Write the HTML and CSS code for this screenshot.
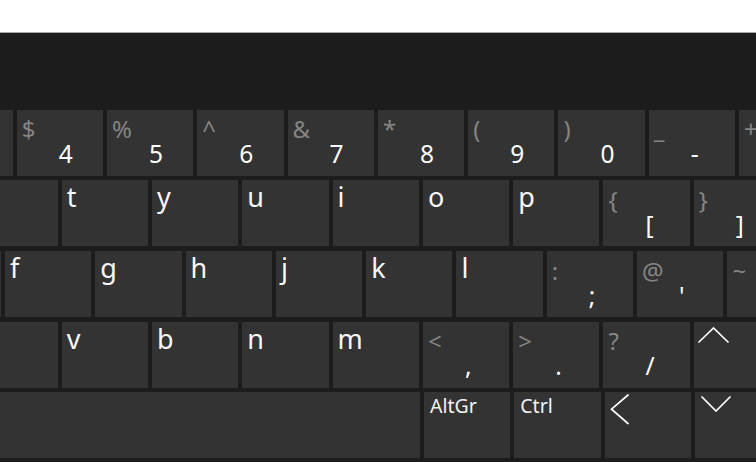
FILE: index.html
```html
<!DOCTYPE html>
<html lang="en">
<head>
<meta charset="utf-8">
<title>Touch keyboard</title>
<link rel="stylesheet" href="styles.css">
</head>
<body>
<div class="titlebar"></div>
<div class="keyboard">
  <div class="row row-1">
    <div class="key"></div>
    <div class="key sym"><span class="sec">$</span><span class="pri">4</span></div>
    <div class="key sym"><span class="sec">%</span><span class="pri">5</span></div>
    <div class="key sym"><span class="sec">^</span><span class="pri">6</span></div>
    <div class="key sym"><span class="sec">&amp;</span><span class="pri">7</span></div>
    <div class="key sym"><span class="sec">*</span><span class="pri">8</span></div>
    <div class="key sym"><span class="sec">(</span><span class="pri">9</span></div>
    <div class="key sym"><span class="sec">)</span><span class="pri">0</span></div>
    <div class="key sym"><span class="sec">_</span><span class="pri">-</span></div>
    <div class="key sym"><span class="sec">+</span></div>
  </div>
  <div class="row row-2">
    <div class="key"></div>
    <div class="key let"><span class="ch">t</span></div>
    <div class="key let"><span class="ch">y</span></div>
    <div class="key let"><span class="ch">u</span></div>
    <div class="key let"><span class="ch">i</span></div>
    <div class="key let"><span class="ch">o</span></div>
    <div class="key let"><span class="ch">p</span></div>
    <div class="key sym"><span class="sec">{</span><span class="pri">[</span></div>
    <div class="key sym"><span class="sec">}</span><span class="pri">]</span></div>
  </div>
  <div class="row row-3">
    <div class="key"></div>
    <div class="key let"><span class="ch">f</span></div>
    <div class="key let"><span class="ch">g</span></div>
    <div class="key let"><span class="ch">h</span></div>
    <div class="key let"><span class="ch">j</span></div>
    <div class="key let"><span class="ch">k</span></div>
    <div class="key let"><span class="ch">l</span></div>
    <div class="key sym"><span class="sec">:</span><span class="pri">;</span></div>
    <div class="key sym"><span class="sec">@</span><span class="pri">'</span></div>
    <div class="key sym"><span class="sec">~</span></div>
  </div>
  <div class="row row-4">
    <div class="key"></div>
    <div class="key let"><span class="ch">v</span></div>
    <div class="key let"><span class="ch">b</span></div>
    <div class="key let"><span class="ch">n</span></div>
    <div class="key let"><span class="ch">m</span></div>
    <div class="key sym"><span class="sec">&lt;</span><span class="pri">,</span></div>
    <div class="key sym"><span class="sec">&gt;</span><span class="pri">.</span></div>
    <div class="key sym"><span class="sec">?</span><span class="pri">/</span></div>
    <div class="key icon">
      <svg class="chev chev-up" width="31" height="16" viewBox="0 0 31 16"><polyline points="1,15 15.5,1 30,15" /></svg>
    </div>
  </div>
  <div class="row row-5">
    <div class="key space"></div>
    <div class="key mod"><span class="lbl">AltGr</span></div>
    <div class="key mod"><span class="lbl">Ctrl</span></div>
    <div class="key icon">
      <svg class="chev chev-left" width="20" height="31" viewBox="0 0 20 31"><polyline points="18,1 1.5,15.2 18,29.5" /></svg>
    </div>
    <div class="key icon">
      <svg class="chev chev-down" width="31" height="16" viewBox="0 0 31 16"><polyline points="1,1 15,15 29,1" /></svg>
    </div>
  </div>
</div>
</body>
</html>
```

FILE: styles.css
```css
html, body {
  margin: 0;
  padding: 0;
}

body {
  width: 756px;
  height: 462px;
  overflow: hidden;
  background: #1c1c1c;
  font-family: "Noto Sans", "Open Sans", "DejaVu Sans", sans-serif;
}

.titlebar {
  height: 32px;
  background: #ffffff;
  border-bottom: 1px solid #a9a9a9;
}

.keyboard {
  display: flex;
  flex-direction: column;
  gap: 4.7px;
  padding-top: 76.5px;
  height: 429px;
  box-sizing: border-box;
  overflow: hidden;
}

.row {
  display: flex;
  gap: 4px;
  height: 66px;
  flex-shrink: 0;
}

.row-1 { margin-left: -73.6px; }
.row-2 { margin-left: -28.6px; }
.row-3 { margin-left: -85.3px; }
.row-4 { margin-left: -28.6px; }
.row-5 { margin-left: -10px; }

.key {
  flex: 0 0 86.3px;
  height: 66px;
  box-sizing: border-box;
  background: #333333;
  padding-left: 5px;
  display: flex;
  flex-direction: column;
  color: #ffffff;
}

.key.space {
  flex-basis: 430px;
}

.key.sym {
  padding-top: 6.7px;
}

.sec {
  display: block;
  height: 25px;
  font-size: 24px;
  line-height: 25px;
  color: #858585;
}

.pri {
  display: block;
  font-size: 24.5px;
  line-height: 25px;
  margin-left: 37px;
  color: #ffffff;
}

.key.let {
  padding-top: 2px;
}

.ch {
  font-size: 27px;
  line-height: 30px;
  color: #f7f7f7;
}

.key.mod {
  padding-left: 6px;
  padding-top: 2.5px;
}

.lbl {
  font-size: 19.5px;
  line-height: 22px;
  color: #f2f2f2;
}

.chev {
  display: block;
  fill: none;
  stroke: #ffffff;
  stroke-width: 1.7;
  stroke-linecap: round;
  stroke-linejoin: miter;
}

.chev-up {
  margin: 5px 0 0 -1px;
}

.chev-down {
  margin: 4px 0 0 1px;
}

.chev-left {
  margin: 2px 0 0 0;
}
```
